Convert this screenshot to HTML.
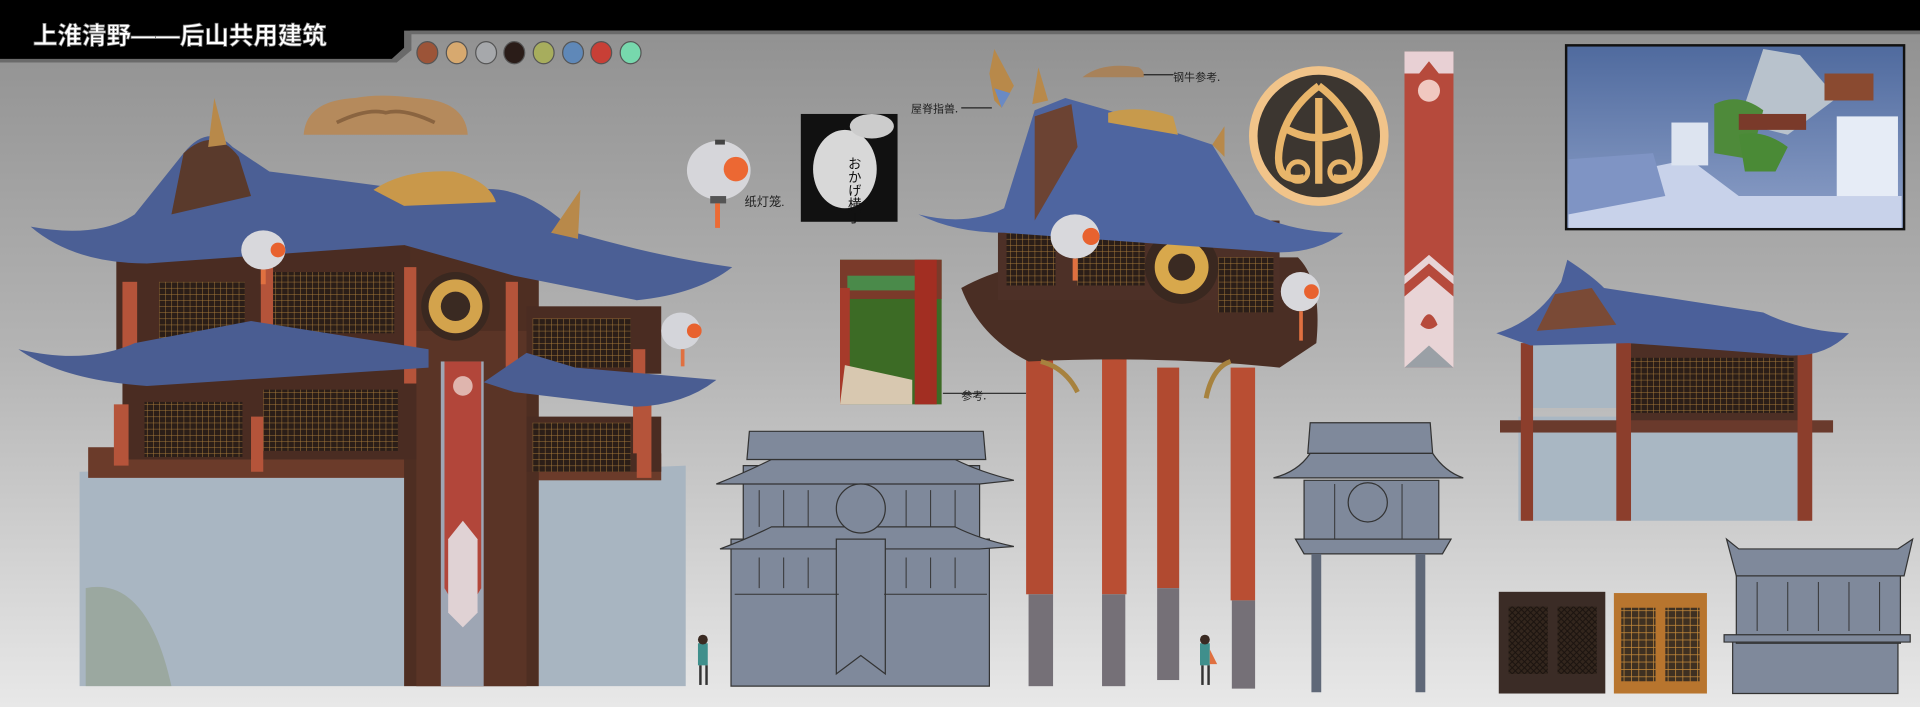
<!DOCTYPE html>
<html><head><meta charset="utf-8"><style>
html,body{margin:0;padding:0;width:1920px;height:707px;overflow:hidden;background:#bbb}
svg{display:block}
</style></head><body>
<svg width="1920" height="707" viewBox="0 0 1568 577" preserveAspectRatio="none" xmlns="http://www.w3.org/2000/svg">
<defs>
<linearGradient id="bg" x1="0" y1="0" x2="0" y2="1"><stop offset="0" stop-color="#8e8e8e"/><stop offset="0.5" stop-color="#b4b4b4"/><stop offset="1" stop-color="#e8e8e8"/></linearGradient>
<linearGradient id="sky" x1="0" y1="0" x2="0" y2="1"><stop offset="0" stop-color="#4f6a9e"/><stop offset="1" stop-color="#8da0c8"/></linearGradient>
<pattern id="win" width="5" height="5" patternUnits="userSpaceOnUse"><rect width="5" height="5" fill="#2b1e18"/><path d="M0 0H5M0 0V5" stroke="#a77a3a" stroke-width="0.8"/></pattern>
<pattern id="win2" width="5" height="5" patternUnits="userSpaceOnUse"><rect width="5" height="5" fill="#33261d"/><path d="M0 0L5 5M5 0L0 5" stroke="#1b130f" stroke-width="0.8"/></pattern>
<pattern id="win3" width="6" height="6" patternUnits="userSpaceOnUse"><rect width="6" height="6" fill="#3e3022"/><path d="M0 0H6M0 0V6" stroke="#c58a3a" stroke-width="1.2"/></pattern>
</defs>
<rect width="1568" height="577" fill="url(#bg)"/>
<!-- header -->
<path d="M0 0H1568V25H335V40L322 50H0Z" fill="#000"/>
<path d="M330 25H1568V28H336V41L324 51H0V48H320L330 39Z" fill="#6a6a6a"/>
<text x="27" y="36" font-family="'Liberation Sans','Noto Sans CJK SC',sans-serif" font-weight="bold" font-size="20" fill="#fff" stroke="#777" stroke-width="0.6">上淮清野——后山共用建筑</text>
<g stroke="#555" stroke-width="1">
<ellipse cx="349" cy="43" rx="8.5" ry="9" fill="#9c5438"/><ellipse cx="373" cy="43" rx="8.5" ry="9" fill="#d7a96f"/>
<ellipse cx="397" cy="43" rx="8.5" ry="9" fill="#a6a8ab"/><ellipse cx="420" cy="43" rx="8.5" ry="9" fill="#2a1c18"/>
<ellipse cx="444" cy="43" rx="8.5" ry="9" fill="#a7ad5d"/><ellipse cx="468" cy="43" rx="8.5" ry="9" fill="#5f88b8"/>
<ellipse cx="491" cy="43" rx="8.5" ry="9" fill="#c83f36"/><ellipse cx="515" cy="43" rx="8.5" ry="9" fill="#77d8ad"/>
</g>

<!-- LEFT BUILDING -->
<path d="M248 110 Q250 82 290 80 Q310 76 340 80 Q380 82 382 110Z" fill="#b58a5c"/>
<path d="M275 100 Q300 88 315 92 Q330 88 355 100" stroke="#8a6440" stroke-width="3" fill="none"/>
<path d="M65 385 L330 380 L330 560 L65 560Z" fill="#a9b6c2"/>
<path d="M440 385 L560 380 L560 560 L440 560Z" fill="#a8b5c1"/>
<path d="M70 480 Q120 470 140 560 L70 560Z" fill="#8d9a7e" opacity="0.5"/>
<rect x="72" y="365" width="270" height="25" fill="#6b3b2a"/>
<rect x="420" y="370" width="120" height="22" fill="#6b3b2a"/>
<rect x="330" y="170" width="110" height="390" fill="#4e2e22"/>
<rect x="340" y="270" width="90" height="290" fill="#5a3426"/>
<rect x="360" y="295" width="35" height="265" fill="#9ea6b4"/>
<path d="M363 295H393V480L378 505L363 480Z" fill="#b2463a"/>
<path d="M366 440L378 425L390 440V500L378 512L366 500Z" fill="#e0d2d4"/>
<circle cx="378" cy="315" r="8" fill="#dfb5ae"/>
<rect x="95" y="200" width="240" height="90" fill="#4a2c22"/>
<rect x="130" y="230" width="70" height="48" fill="url(#win)"/>
<rect x="222" y="222" width="100" height="50" fill="url(#win)"/>
<rect x="430" y="250" width="110" height="55" fill="#4a2c22"/>
<rect x="435" y="260" width="80" height="40" fill="url(#win)"/>
<rect x="100" y="300" width="240" height="75" fill="#4a2c22"/>
<rect x="118" y="328" width="80" height="45" fill="url(#win)"/>
<rect x="215" y="318" width="110" height="50" fill="url(#win)"/>
<rect x="430" y="340" width="110" height="45" fill="#4a2c22"/>
<rect x="435" y="345" width="80" height="40" fill="url(#win)"/>
<g fill="#b5543a"><rect x="100" y="230" width="12" height="60"/><rect x="213" y="200" width="10" height="90"/><rect x="330" y="218" width="10" height="95"/><rect x="413" y="230" width="10" height="85"/><rect x="517" y="285" width="10" height="85"/><rect x="93" y="330" width="12" height="50"/><rect x="205" y="340" width="10" height="45"/><rect x="520" y="330" width="12" height="60"/></g>
<path d="M25 185 Q80 195 110 175 L150 125 Q170 100 190 120 L220 140 Q300 150 370 160 Q420 140 470 190 Q540 210 598 218 Q570 240 520 245 L420 225 L330 200 L120 215 Q60 215 25 185Z" fill="#4b5f95"/>
<path d="M150 125 Q175 102 195 128 L205 160 L140 175Z" fill="#5a3a2c"/>
<path d="M305 155 Q330 138 370 140 Q400 148 405 165 L330 168Z" fill="#c9984a"/>
<path d="M15 285 Q70 298 110 280 L205 262 L350 285 L350 300 L120 315 Q50 310 15 285Z" fill="#4a5d92"/>
<path d="M395 312 L430 288 L470 300 L585 310 Q560 330 520 332 L420 320Z" fill="#4a5d92"/>
<path d="M170 120 L175 80 L185 118Z" fill="#b8894a"/><path d="M450 190 L474 155 L472 195Z" fill="#b8894a"/>
<circle cx="372" cy="250" r="28" fill="#3a2820"/><circle cx="372" cy="250" r="22" fill="#d3a34c"/><circle cx="372" cy="250" r="12" fill="#3a2a22"/>
<g><ellipse cx="215" cy="204" rx="18" ry="16" fill="#d8d8dc"/><circle cx="227" cy="204" r="6" fill="#e8622f"/><rect x="213" y="220" width="4" height="12" fill="#e07040"/></g>
<g><ellipse cx="556" cy="270" rx="16" ry="15" fill="#d4d5da"/><circle cx="567" cy="270" r="6" fill="#e8622f"/><rect x="556" y="285" width="3" height="14" fill="#e07040"/></g>
<g><ellipse cx="587" cy="139" rx="26" ry="24" fill="#d6d6da"/><circle cx="601" cy="138" r="10" fill="#ec6833"/><rect x="584" y="114" width="8" height="4" fill="#444"/><rect x="580" y="160" width="13" height="6" fill="#555"/><rect x="584" y="166" width="4" height="20" fill="#ec6b35"/></g>
<text x="608" y="168" font-family="'Liberation Sans','Noto Sans CJK SC',sans-serif" font-size="10" fill="#222">纸灯笼.</text>
<g><rect x="570" y="525" width="8" height="18" fill="#3f8f8c"/><circle cx="574" cy="522" r="4" fill="#3a2a22"/><rect x="571" y="543" width="2" height="16" fill="#333"/><rect x="576" y="543" width="2" height="16" fill="#333"/></g>
<g><rect x="980" y="525" width="8" height="18" fill="#3f8f8c"/><circle cx="984" cy="522" r="4" fill="#3a2a22"/><rect x="981" y="543" width="2" height="16" fill="#333"/><rect x="986" y="543" width="2" height="16" fill="#333"/><path d="M988 530l6 12h-6z" fill="#e07040"/></g>

<rect x="654" y="93" width="79" height="88" fill="#111"/>
<ellipse cx="690" cy="138" rx="26" ry="32" fill="#d8d8d8"/>
<ellipse cx="712" cy="103" rx="18" ry="10" fill="#ccc"/>
<text x="698" y="128" font-family="'Noto Sans CJK JP',sans-serif" font-size="11" fill="#111" writing-mode="tb">おかげ横丁</text>
<rect x="686" y="212" width="83" height="118" fill="#3c6b25"/>
<rect x="686" y="212" width="83" height="32" fill="#7a3a2a"/>
<rect x="692" y="225" width="60" height="12" fill="#4a8a4a"/>
<rect x="747" y="212" width="18" height="118" fill="#a22e22"/>
<rect x="686" y="235" width="8" height="95" fill="#a63a2a"/>
<path d="M690 298 L745 310 L745 330 L686 330Z" fill="#d8c8b0"/>
<path d="M770 321H838" stroke="#222" stroke-width="1"/>
<text x="785" y="326" font-family="'Noto Sans CJK SC',sans-serif" font-size="9" fill="#222">参考.</text>
<path d="M808 60 L812 40 L828 70 L818 88 L812 82Z" fill="#b8894a"/><path d="M812 72 L825 76 L818 88Z" fill="#6a8ac4"/>
<path d="M785 88H810" stroke="#222" stroke-width="1"/>
<text x="744" y="92" font-family="'Noto Sans CJK SC',sans-serif" font-size="9" fill="#222">屋脊指兽.</text>
<path d="M884 63 Q900 50 930 55 Q935 58 934 63Z" fill="#a8825a"/>
<path d="M934 61H958" stroke="#222" stroke-width="1"/>
<text x="958" y="66" font-family="'Noto Sans CJK SC',sans-serif" font-size="9" fill="#222">钢牛参考.</text>

<!-- CENTER GATE -->
<rect x="838" y="290" width="22" height="195" fill="#b34b32"/><rect x="840" y="485" width="20" height="75" fill="#757077"/>
<rect x="900" y="290" width="20" height="195" fill="#b94e33"/><rect x="900" y="485" width="19" height="75" fill="#757077"/>
<rect x="945" y="300" width="18" height="180" fill="#b14a30"/><rect x="945" y="480" width="18" height="75" fill="#757077"/>
<rect x="1005" y="300" width="20" height="190" fill="#b94e33"/><rect x="1006" y="490" width="19" height="72" fill="#757077"/>
<path d="M785 235 Q830 210 900 210 L1060 210 Q1080 230 1075 280 L1045 300 Q950 290 840 295 Q800 275 785 235Z" fill="#4a2e24"/>
<rect x="815" y="180" width="230" height="65" fill="#4d3027"/>
<rect x="822" y="188" width="40" height="45" fill="url(#win)"/><rect x="880" y="188" width="55" height="45" fill="url(#win)"/>
<rect x="995" y="210" width="45" height="45" fill="url(#win)"/>
<circle cx="965" cy="218" r="30" fill="#3a2820"/><circle cx="965" cy="218" r="22" fill="#d8a84c"/><circle cx="965" cy="218" r="11" fill="#3a2a22"/>
<path d="M750 175 Q790 185 820 170 L845 90 L870 80 L905 90 L990 118 L1025 175 Q1060 190 1097 190 Q1070 210 1030 205 L820 190 Q780 190 750 175Z" fill="#4e65a0"/>
<path d="M845 95 L875 85 L880 120 L845 180Z" fill="#6c4333"/>
<path d="M905 92 Q930 85 958 95 L962 110 L905 100Z" fill="#c79a4c"/>
<path d="M843 85 L848 55 L856 82Z" fill="#b8894a"/><path d="M990 118 L1000 103 L1000 128Z" fill="#b8894a"/>
<path d="M850 295 Q870 300 880 320 M1005 295 Q990 300 985 325" stroke="#a7823e" stroke-width="4" fill="none"/>
<g><ellipse cx="878" cy="193" rx="20" ry="18" fill="#d8d8dc"/><circle cx="891" cy="193" r="7" fill="#e8622f"/><rect x="876" y="211" width="4" height="18" fill="#e07040"/></g>
<g><ellipse cx="1062" cy="238" rx="16" ry="16" fill="#d8d8dc"/><circle cx="1071" cy="238" r="6" fill="#e8622f"/><rect x="1061" y="254" width="3" height="24" fill="#e07040"/></g>
<circle cx="1077" cy="111" r="57" fill="#f1c48a"/><circle cx="1077" cy="111" r="50" fill="#3c3630"/>
<path d="M1077 70 Q1050 90 1045 120 Q1040 150 1065 145 M1077 70 Q1104 90 1109 120 Q1114 150 1089 145 M1077 80 V150 M1050 105 Q1077 120 1104 105" stroke="#e8b56a" stroke-width="6" fill="none"/>
<circle cx="1060" cy="140" r="8" fill="none" stroke="#e8b56a" stroke-width="4"/><circle cx="1094" cy="140" r="8" fill="none" stroke="#e8b56a" stroke-width="4"/>
<rect x="1147" y="42" width="40" height="258" fill="#b64a3c"/>
<path d="M1147 42H1187V60L1175 60L1167 50L1159 60H1147Z" fill="#e8d0d4"/>
<circle cx="1167" cy="74" r="9" fill="#f0c8c0"/>
<path d="M1147 225 L1167 208 L1187 225 V300 H1147Z" fill="#e8d4d6"/>
<path d="M1147 232 L1167 215 L1187 232 V242 L1167 225 L1147 242Z" fill="#b64a3c"/>
<path d="M1160 265 Q1167 248 1174 265 Q1167 272 1160 265Z" fill="#b64a3c"/>
<path d="M1147 300 L1167 282 L1187 300Z" fill="#9aa0a6"/>

<!-- sketch buildings -->
<g fill="#7f899b" stroke="#333" stroke-width="1">
<path d="M597 560 V440 H808 V560Z"/>
<path d="M607 380 H800 V440 H607Z"/>
<path d="M588 448 Q610 440 630 430 H780 Q800 440 828 446 L800 448 H610Z"/>
<path d="M585 395 Q610 385 630 375 H780 Q800 385 828 392 L800 395 H610Z"/>
<path d="M610 375 L612 352 H803 L805 375Z"/>
<circle cx="703" cy="415" r="20"/>
<path d="M683 440 V550 L703 535 L723 550 V440Z"/>
<path d="M1068 370 L1070 345 H1168 L1170 370Z"/>
<path d="M1065 392 H1175 V445 H1065Z"/>
<path d="M1040 390 Q1060 385 1070 370 H1170 Q1180 385 1195 390Z"/>
<path d="M1058 440 H1185 L1178 452 H1065Z"/>
<circle cx="1117" cy="410" r="16"/>
<path d="M1415 522 V566 H1550 V522Z"/>
<path d="M1418 470 H1552 V525 H1418Z"/>
<path d="M1410 440 L1420 448 H1550 L1562 440 L1555 470 H1418Z"/>
<path d="M1408 518 H1560 V524 H1408Z"/>
</g>
<g stroke="#333" stroke-width="0.8" fill="none">
<path d="M620 400V430M640 400V430M660 400V430M740 400V430M760 400V430M780 400V430M620 455V480M640 455V480M660 455V480M740 455V480M760 455V480M780 455V480M600 485H685M722 485H806"/>
<path d="M1090 395V440M1145 395V440M1435 475V515M1460 475V515M1485 475V515M1510 475V515M1535 475V515"/>
</g>
<path d="M1075 565 V452 M1160 565 V452" stroke="#5f6878" stroke-width="8"/>
<!-- right building -->
<rect x="1240" y="340" width="235" height="85" fill="#a9b7c3"/>
<rect x="1250" y="278" width="70" height="55" fill="#a9b7c3"/>
<rect x="1320" y="280" width="155" height="70" fill="#4d2f25"/>
<rect x="1330" y="292" width="135" height="45" fill="url(#win)"/>
<rect x="1225" y="343" width="272" height="10" fill="#6a3a2c"/>
<g fill="#8c3e2c"><rect x="1242" y="280" width="10" height="145"/><rect x="1320" y="270" width="12" height="155"/><rect x="1468" y="285" width="12" height="140"/></g>
<path d="M1222 272 Q1255 262 1275 230 L1280 212 Q1300 225 1310 235 L1440 255 Q1470 270 1510 272 Q1490 292 1460 290 L1330 280 L1250 282Z" fill="#4b609a"/>
<path d="M1270 240 L1300 235 L1320 265 L1255 270Z" fill="#7a4a36"/>
<rect x="1224" y="483" width="87" height="83" fill="#3b2c26"/>
<rect x="1232" y="495" width="32" height="55" fill="url(#win2)"/><rect x="1272" y="495" width="32" height="55" fill="url(#win2)"/>
<rect x="1318" y="484" width="76" height="82" fill="#b8752e"/>
<rect x="1324" y="496" width="28" height="60" fill="url(#win3)"/><rect x="1360" y="496" width="28" height="60" fill="url(#win3)"/>
<!-- screenshot -->
<rect x="1279" y="37" width="276" height="150" fill="url(#sky)" stroke="#111" stroke-width="2"/>
<path d="M1440 40 L1470 45 L1500 80 L1460 110 L1420 100Z" fill="#b8c2cc"/>
<path d="M1281 150 L1380 130 L1420 160 L1553 160 V186 H1281Z" fill="#c8d2ea"/>
<path d="M1281 130 L1350 125 L1360 160 L1281 175Z" fill="#7f94c4"/>
<path d="M1400 85 Q1420 75 1440 90 L1430 130 L1400 125Z" fill="#4e8a3a"/>
<rect x="1420" y="93" width="55" height="13" fill="#7a3a2a"/><rect x="1490" y="60" width="40" height="22" fill="#8a4a30"/>
<rect x="1500" y="95" width="50" height="65" fill="#e6ecf6"/>
<rect x="1365" y="100" width="30" height="35" fill="#dde4f0"/>
<path d="M1420 110 Q1440 105 1460 120 L1450 140 L1425 140Z" fill="#4a8a36"/>
</svg>
</body></html>
